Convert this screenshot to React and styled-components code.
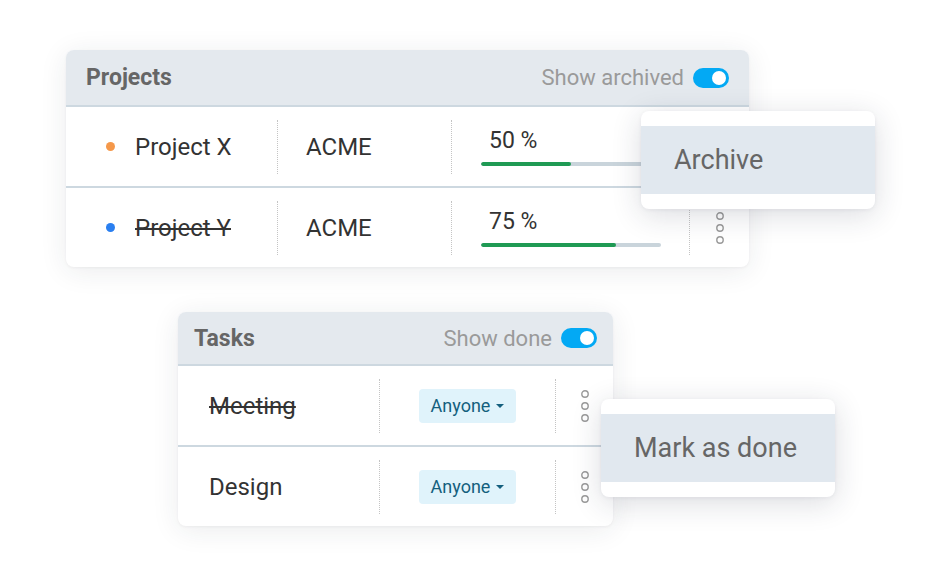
import React from "react";
import styled, { createGlobalStyle } from "styled-components";

const GlobalStyle = createGlobalStyle`
  html, body {
    margin: 0;
    padding: 0;
    background: #ffffff;
    font-family: Roboto, "Liberation Sans", sans-serif;
  }
`;

const Stage = styled.div`
  display: flex;
  flex-direction: column;
  align-items: flex-start;
  padding: 50px 0 0 66px;
  width: 940px;
  height: 574px;
  box-sizing: border-box;
`;

const Card = styled.div`
  position: relative;
  width: ${(p) => p.$width}px;
  margin-left: ${(p) => p.$offset || 0}px;
  margin-top: ${(p) => p.$top || 0}px;
  background: #fff;
  border-radius: 8px;
  box-shadow: 0 4px 28px rgba(30, 40, 60, 0.09), 0 1px 3px rgba(30, 40, 60, 0.05);
`;

const Header = styled.div`
  display: flex;
  align-items: center;
  justify-content: space-between;
  height: ${(p) => p.$height}px;
  padding: 0 ${(p) => p.$pad}px;
  background: #e4e9ee;
  border-radius: 8px 8px 0 0;
  border-bottom: 2px solid #cdd8e0;
`;

const Title = styled.span`
  font-size: 23px;
  font-weight: 700;
  color: #666;
`;

const Filter = styled.label`
  display: flex;
  align-items: center;
  gap: 9px;
  font-size: 22px;
  color: #9a9a9a;
`;

const Toggle = styled.span`
  position: relative;
  width: 36px;
  height: 20px;
  border-radius: 10px;
  background: #03a9f4;

  &::after {
    content: "";
    position: absolute;
    top: 3px;
    right: 3px;
    width: 14px;
    height: 14px;
    border-radius: 50%;
    background: #fff;
  }
`;

const Row = styled.div`
  display: grid;
  grid-template-columns: ${(p) => p.$cols};
  align-items: center;
  height: ${(p) => p.$height}px;
  & + & {
    border-top: 2px solid #cdd8e0;
  }
`;

const Cell = styled.div`
  display: flex;
  align-items: center;
  justify-content: ${(p) => (p.$center ? "center" : "flex-start")};
  gap: ${(p) => p.$gap || 0}px;
  height: 54px;
  padding-left: ${(p) => p.$pad || 0}px;
  border-left: ${(p) => (p.$divider ? "1px dotted #c4c4c4" : "none")};
  box-sizing: border-box;
  font-size: 24px;
  color: #333;
`;

const StackCell = styled(Cell)`
  flex-direction: column;
  align-items: flex-start;
  justify-content: center;
  gap: 8px;
  font-size: 23px;
`;

const Dot = styled.span`
  width: 9px;
  height: 9px;
  border-radius: 50%;
  background: ${(p) => p.$color};
`;

const Name = styled.span`
  text-decoration: ${(p) => (p.$done ? "line-through" : "none")};
  text-decoration-thickness: 1.5px;
`;

const Percent = styled.span`
  padding-left: 8px;
  line-height: 26px;
`;

const Track = styled.div`
  width: 180px;
  height: 4px;
  border-radius: 2px;
  background: #c9d4db;
  overflow: hidden;
`;

const Fill = styled.div`
  height: 100%;
  border-radius: 2px;
  background: #1f9a54;
`;

const Badge = styled.span`
  display: flex;
  align-items: center;
  gap: 6px;
  height: 34px;
  padding: 0 12px;
  border-radius: 4px;
  background: #e0f3fb;
  color: #145f7e;
  font-size: 18px;

  &::after {
    content: "";
    border-left: 4px solid transparent;
    border-right: 4px solid transparent;
    border-top: 4px solid #145f7e;
  }
`;

const Popup = styled.div`
  position: absolute;
  left: ${(p) => p.$left}px;
  top: ${(p) => p.$top}px;
  width: 234px;
  padding: 15px 0;
  background: #fff;
  border-radius: 8px;
  box-shadow: 0 6px 30px rgba(30, 40, 60, 0.16), 0 1px 4px rgba(30, 40, 60, 0.06);
  z-index: 2;
`;

const MenuItem = styled.div`
  display: flex;
  align-items: center;
  height: 68px;
  padding-left: 33px;
  background: #e1e8ef;
  font-size: 27px;
  color: #666;
`;

function MoreDots() {
  return (
    <svg width="10" height="32" viewBox="0 0 10 32">
      {[4, 16, 28].map((cy) => (
        <circle key={cy} cx="5" cy={cy} r="3.2" fill="none" stroke="#999" strokeWidth="1.4" />
      ))}
    </svg>
  );
}

const projects = [
  { name: "Project X", color: "#f5984a", client: "ACME", pct: 50, done: false, menu: false },
  { name: "Project Y", color: "#2a7ff0", client: "ACME", pct: 75, done: true, menu: true },
];

const tasks = [
  { name: "Meeting", done: true },
  { name: "Design", done: false },
];

export default function App() {
  return (
    <>
      <GlobalStyle />
      <Stage>
        <Card $width={683}>
          <Header $height={55} $pad={20}>
            <Title>Projects</Title>
            <Filter>
              Show archived
              <Toggle />
            </Filter>
          </Header>
          {projects.map((p) => (
            <Row key={p.name} $cols="211px 174px 238px 1fr" $height={79}>
              <Cell $pad={40} $gap={20}>
                <Dot $color={p.color} />
                <Name $done={p.done}>{p.name}</Name>
              </Cell>
              <Cell $divider $pad={28}>
                {p.client}
              </Cell>
              <StackCell $divider $pad={29}>
                <Percent>{p.pct} %</Percent>
                <Track>
                  <Fill style={{ width: `${p.pct}%` }} />
                </Track>
              </StackCell>
              <Cell $divider $center>
                {p.menu && <MoreDots />}
              </Cell>
            </Row>
          ))}
          <Popup $left={575} $top={61}>
            <MenuItem>Archive</MenuItem>
          </Popup>
        </Card>

        <Card $width={435} $offset={112} $top={45}>
          <Header $height={52} $pad={16}>
            <Title>Tasks</Title>
            <Filter>
              Show done
              <Toggle />
            </Filter>
          </Header>
          {tasks.map((t) => (
            <Row key={t.name} $cols="201px 176px 1fr" $height={79}>
              <Cell $pad={31}>
                <Name $done={t.done}>{t.name}</Name>
              </Cell>
              <Cell $divider $center>
                <Badge>Anyone</Badge>
              </Cell>
              <Cell $divider $center>
                <MoreDots />
              </Cell>
            </Row>
          ))}
          <Popup $left={423} $top={87}>
            <MenuItem>Mark as done</MenuItem>
          </Popup>
        </Card>
      </Stage>
    </>
  );
}
